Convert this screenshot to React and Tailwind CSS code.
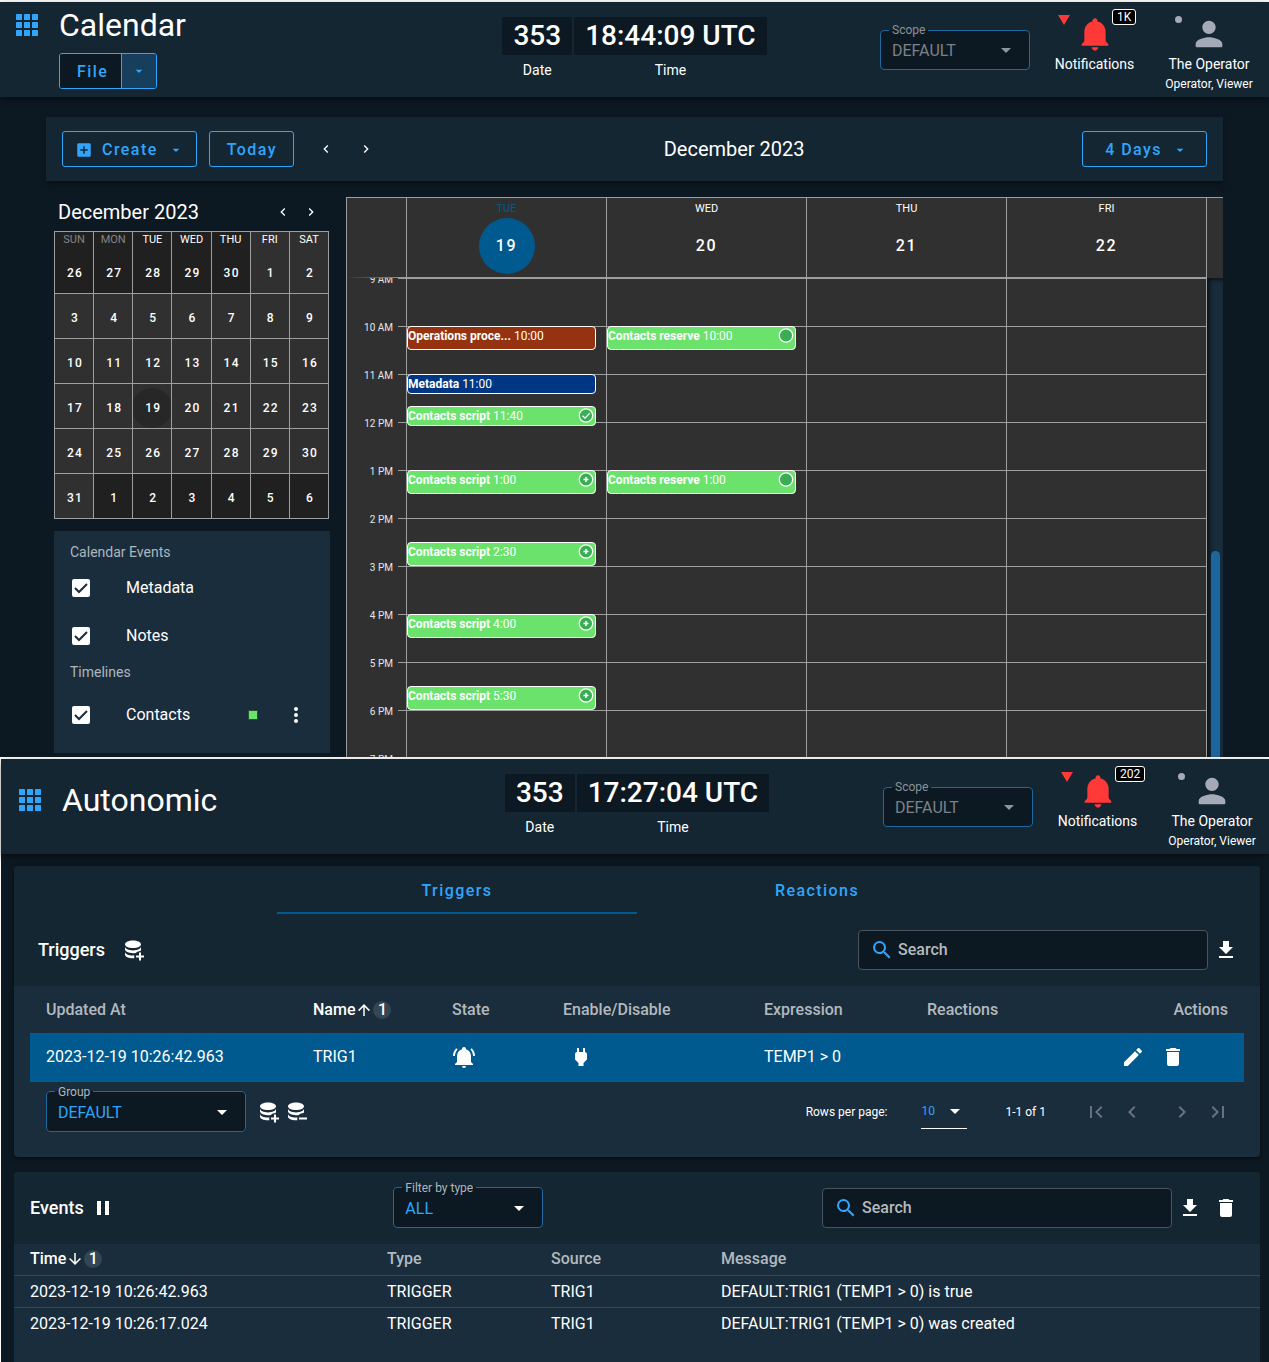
import React, { useState } from 'react';

// Icon paths, 24x24 grid
const ICONS = {
  menuDown: 'M7,10L12,15L17,10H7Z',
  plusBox: 'M17,13H13V17H11V13H7V11H11V7H13V11H17M19,3H5C3.89,3 3,3.89 3,5V19A2,2 0 0,0 5,21H19A2,2 0 0,0 21,19V5C21,3.89 20.1,3 19,3Z',
  chevronLeft: 'M15.41,16.58L10.83,12L15.41,7.41L14,6L8,12L14,18L15.41,16.58Z',
  chevronRight: 'M8.59,16.58L13.17,12L8.59,7.41L10,6L16,12L10,18L8.59,16.58Z',
  pageFirst: 'M18.41,16.59L13.82,12L18.41,7.41L17,6L11,12L17,18L18.41,16.59M6,6H8V18H6V6Z',
  pageLast: 'M5.59,7.41L10.18,12L5.59,16.59L7,18L13,12L7,6L5.59,7.41M16,6H18V18H16V6Z',
  dots: 'M12,16A2,2 0 0,1 14,18A2,2 0 0,1 12,20A2,2 0 0,1 10,18A2,2 0 0,1 12,16M12,10A2,2 0 0,1 14,12A2,2 0 0,1 12,14A2,2 0 0,1 10,12A2,2 0 0,1 12,10M12,4A2,2 0 0,1 14,6A2,2 0 0,1 12,8A2,2 0 0,1 10,6A2,2 0 0,1 12,4Z',
  bell: 'M12 22c1.1 0 2-.9 2-2h-4c0 1.1.89 2 2 2zm6.4-5.6v-5.4c0-3.3-1.9-5.9-4.9-6.5V4c0-.83-.67-1.5-1.5-1.5s-1.5.67-1.5 1.5v.5c-3 .6-4.9 3.2-4.9 6.5v5.4l-1.6 1.8v.8h16v-.8z',
  person: 'M12 12c2.21 0 4-1.79 4-4s-1.79-4-4-4-4 1.79-4 4 1.79 4 4 4zm0 2c-2.67 0-8 1.34-8 4v1.4q0 .6.6.6h14.8q.6 0 .6-.6v-1.4c0-2.66-5.33-4-8-4z',
  bellRing: 'M21,19V20H3V19L5,17V11C5,7.9 7.03,5.17 10,4.29C10,4.19 10,4.1 10,4A2,2 0 0,1 12,2A2,2 0 0,1 14,4C14,4.1 14,4.19 14,4.29C16.97,5.17 19,7.9 19,11V17L21,19M14,21A2,2 0 0,1 12,23A2,2 0 0,1 10,21M19.75,3.19L18.33,4.61C20.04,6.3 21,8.6 21,11H23C23,8.07 21.84,5.25 19.75,3.19M1,11H3C3,8.6 3.96,6.3 5.67,4.61L4.25,3.19C2.16,5.25 1,8.07 1,11Z',
  plug: 'M16,7V3H14V7H10V3H8V7H8C7,7 6,8 6,9V14.5L9.5,18V21H14.5V18L18,14.5V9C18,8 17,7 16,7Z',
  pencil: 'M20.71,7.04C21.1,6.65 21.1,6 20.71,5.63L18.37,3.29C18,2.9 17.35,2.9 16.96,3.29L15.12,5.12L18.87,8.87M3,17.25V21H6.75L17.81,9.93L14.06,6.18L3,17.25Z',
  trash: 'M19,4H15.5L14.5,3H9.5L8.5,4H5V6H19M6,19A2,2 0 0,0 8,21H16A2,2 0 0,0 18,19V7H6V19Z',
  download: 'M5,20H19V18H5M19,9H15V3H9V9H5L12,16L19,9Z',
  magnify: 'M9.5,3A6.5,6.5 0 0,1 16,9.5C16,11.11 15.41,12.59 14.44,13.73L14.71,14H15.5L20.5,19L19,20.5L14,15.5V14.71L13.73,14.44C12.59,15.41 11.11,16 9.5,16A6.5,6.5 0 0,1 3,9.5A6.5,6.5 0 0,1 9.5,3M9.5,5C7,5 5,7 5,9.5C5,12 7,14 9.5,14C12,14 14,12 14,9.5C14,7 12,5 9.5,5Z',
  pause: 'M14,19H18V5H14M6,19H10V5H6V19Z',
  arrowUp: 'M13,20H11V8L5.5,13.5L4.08,12.08L12,4.16L19.92,12.08L18.5,13.5L13,8V20Z',
  arrowDown: 'M11,4H13V16L18.5,10.5L19.92,11.92L12,19.84L4.08,11.92L5.5,10.5L11,16V4Z',
  dbPlus: 'M11,2.5C6.6,2.5 3,4.2 3,6.3C3,8.4 6.6,10.1 11,10.1C15.4,10.1 19,8.4 19,6.3C19,4.2 15.4,2.5 11,2.5M3,8.6V11.3C3,13.5 6.6,15.2 11,15.2C12,15.2 13,15.1 13.9,14.9C15.1,13.7 16.8,13 18.6,13C18.9,12.5 19,11.9 19,11.3V8.6C19,10.8 15.4,12.5 11,12.5C6.6,12.5 3,10.8 3,8.6M3,13.7V16.4C3,18.6 6.6,20.3 11,20.3L12.4,20.2C12.2,19.2 12.2,18.3 12.4,17.5L11,17.6C6.6,17.6 3,15.9 3,13.7M17,14.5V17.5H14V19.5H17V22.5H19V19.5H22V17.5H19V14.5H17Z',
  dbMinus: 'M11,2.5C6.6,2.5 3,4.2 3,6.3C3,8.4 6.6,10.1 11,10.1C15.4,10.1 19,8.4 19,6.3C19,4.2 15.4,2.5 11,2.5M3,8.6V11.3C3,13.5 6.6,15.2 11,15.2C12,15.2 13,15.1 13.9,14.9C15.1,13.7 16.8,13 18.6,13C18.9,12.5 19,11.9 19,11.3V8.6C19,10.8 15.4,12.5 11,12.5C6.6,12.5 3,10.8 3,8.6M3,13.7V16.4C3,18.6 6.6,20.3 11,20.3L12.4,20.2C12.2,19.2 12.2,18.3 12.4,17.5L11,17.6C6.6,17.6 3,15.9 3,13.7M14,17.5V19.5H22V17.5H14Z',
};

const Icon = ({ name, className = 'size-6' }) => (
  <svg viewBox="0 0 24 24" fill="currentColor" className={`shrink-0 ${className}`} aria-hidden="true">
    <path d={ICONS[name]} />
  </svg>
);

const IconButton = ({ name, label, className = 'size-9', iconClass = 'size-6', disabled = false }) => (
  <button type="button" aria-label={label} disabled={disabled} className={`flex shrink-0 items-center justify-center ${className}`}>
    <Icon name={name} className={iconClass} />
  </button>
);

// Outlined select with the label sitting in the top border
const OutlinedSelect = ({ id, label, value, width, tone = 'text-[#30a5fb]', labelTone = 'text-[#aeb6bd]', arrowTone = 'text-white', disabled = false }) => (
  <fieldset className={`relative shrink-0 rounded border border-[#2069a0] bg-[#0d1922] pb-[3px] ${width}`}>
    <legend className="ml-2 h-3 px-[3px]">
      <label htmlFor={id} className={`block text-xs leading-3 ${labelTone}`}>{label}</label>
    </legend>
    <select
      id={id}
      disabled={disabled}
      className={`block h-[30px] w-full appearance-none bg-transparent pl-[11px] pr-10 text-base leading-6 opacity-100 outline-none ${tone}`}
    >
      <option>{value}</option>
    </select>
    <Icon name="menuDown" className={`pointer-events-none absolute right-[11px] bottom-[7px] size-6 ${arrowTone}`} />
  </fieldset>
);

const SearchBox = ({ id }) => (
  <div className="flex h-10 w-[350px] items-center gap-1 rounded border border-[#4a545c] bg-[#0d1922] pl-[11px]">
    <Icon name="magnify" className="size-6 text-[#30a5fb]" />
    <input
      id={id}
      type="text"
      aria-label="Search"
      placeholder="Search"
      className="w-full min-w-0 bg-transparent text-base font-medium text-white outline-none placeholder:text-[#b6babd]"
    />
  </div>
);

const Header = ({ id, title, time, badge, padding, titlePadding, children }) => (
  <header className={`relative z-10 grid min-h-[95px] grid-cols-[1fr_auto_1fr] bg-[#152633] shadow-[0_3px_8px_rgba(0,0,0,0.45)] ${padding}`}>
    <div className={`flex items-start gap-[21px] ${titlePadding}`}>
      <button type="button" aria-label="Applications" className="flex h-10 items-center">
        <svg viewBox="0 0 22 22" className="size-[22px] fill-[#30a5fb]">
          {[0, 8, 16].map(y => [0, 8, 16].map(x => (
            <rect key={`${x}-${y}`} x={x} y={y} width="6" height="6" rx="0.5" />
          )))}
        </svg>
      </button>
      <div>
        <h1 className="text-[32px] leading-10 text-white">{title}</h1>
        {children}
      </div>
    </div>

    <div className="flex gap-0.5 pt-[15px] text-center">
      <div>
        <div className="bg-[#0d1922] px-[11px] text-[28px] leading-[38px] font-medium">353</div>
        <div className="mt-[5px] text-sm">Date</div>
      </div>
      <div>
        <div className="bg-[#0d1922] px-[11px] text-[28px] leading-[38px] font-medium">{time}</div>
        <div className="mt-[5px] text-sm">Time</div>
      </div>
    </div>

    <div className="flex items-start justify-end gap-6">
      <div className="pt-[22px]">
        <OutlinedSelect id={`${id}-scope`} label="Scope" value="DEFAULT" width="w-[150px]" tone="text-[#7b8288]" labelTone="text-[#8b9298]" arrowTone="text-[#8f959a]" disabled />
      </div>
      <div className="relative flex w-[81px] flex-col items-center pt-3">
        <svg viewBox="0 0 12 10" className="absolute top-[13px] left-1 h-[10px] w-3 fill-[#ff3838]">
          <path d="M0 0H12L6 10Z" />
        </svg>
        <span className="absolute top-[7px] left-[58px] rounded-[3px] border border-white bg-black px-1 text-xs leading-[14px]">{badge}</span>
        <Icon name="bell" className="size-10 text-[#ff3838]" />
        <span className="text-sm whitespace-nowrap">Notifications</span>
      </div>
      <div className="relative flex w-[100px] flex-col items-center pt-3">
        <span className="absolute top-[14px] left-4 size-[7px] rounded-full bg-[#a4abb6]" />
        <Icon name="person" className="size-10 text-[#a4abb6]" />
        <span className="text-sm whitespace-nowrap">The Operator</span>
        <span className="text-xs leading-5 whitespace-nowrap">Operator, Viewer</span>
      </div>
    </div>
  </header>
);

const WEEKDAYS = ['SUN', 'MON', 'TUE', 'WED', 'THU', 'FRI', 'SAT'];

// Six weeks, starting on Sunday November 26
const MONTH = Array.from({ length: 42 }, (_, i) => {
  if (i < 5) return { day: 26 + i, out: true };
  if (i < 36) return { day: i - 4, out: false };
  return { day: i - 35, out: true };
});

const MiniCalendar = () => (
  <div className="mr-px grid grid-cols-7 border-t border-l border-[#9e9e9e]">
    {MONTH.map(({ day, out }, i) => (
      <div key={i} className={`flex flex-col items-center overflow-hidden border-r border-b border-[#9e9e9e] ${out ? 'bg-[#202020]' : 'bg-[#303030]'}`}>
        {i < 7 && (
          <span className={`h-[17px] text-[11px] leading-4 ${i < 2 ? 'text-[#858585]' : 'text-white'}`}>{WEEKDAYS[i]}</span>
        )}
        <button
          type="button"
          className={`mt-1 flex size-10 items-center justify-center rounded-full pl-0.5 text-xs font-medium tracking-widest ${!out && day === 19 ? 'bg-[#272727]' : ''}`}
        >
          {day}
        </button>
      </div>
    ))}
  </div>
);

const EventCheck = ({ id, label, height = 'h-12', children }) => {
  const [checked, setChecked] = useState(true);
  return (
    <div className={`flex items-center pl-[18px] pr-[26px] ${height}`}>
      <span className="relative flex size-[18px]">
        <input
          id={id}
          type="checkbox"
          checked={checked}
          onChange={e => setChecked(e.target.checked)}
          className="size-[18px] appearance-none rounded-[2px] border-2 border-white checked:bg-white"
        />
        {checked && (
          <svg viewBox="0 0 18 18" className="pointer-events-none absolute inset-0 size-[18px] fill-none stroke-[#1a2d3d] stroke-2">
            <path d="M3 9L7 13L15 5" />
          </svg>
        )}
      </span>
      <label htmlFor={id} className="ml-9 flex-1 text-base">{label}</label>
      {children}
    </div>
  );
};

const HOURS = ['9 AM', '10 AM', '11 AM', '12 PM', '1 PM', '2 PM', '3 PM', '4 PM', '5 PM', '6 PM', '7 PM'];
const HOUR_PX = 48;

// start is in hours after 9 AM
const DAYS = [
  {
    name: 'TUE', day: 19, today: true,
    events: [
      { title: 'Operations proce...', time: '10:00', start: 1, height: 24, color: 'bg-[#953210]' },
      { title: 'Metadata', time: '11:00', start: 2, height: 20, color: 'bg-[#003784]' },
      { title: 'Contacts script', time: '11:40', start: 8 / 3, height: 20, color: 'bg-[#6ae26c]', mark: 'check' },
      { title: 'Contacts script', time: '1:00', start: 4, height: 24, color: 'bg-[#6ae26c]', mark: 'plus' },
      { title: 'Contacts script', time: '2:30', start: 5.5, height: 24, color: 'bg-[#6ae26c]', mark: 'plus' },
      { title: 'Contacts script', time: '4:00', start: 7, height: 24, color: 'bg-[#6ae26c]', mark: 'plus' },
      { title: 'Contacts script', time: '5:30', start: 8.5, height: 24, color: 'bg-[#6ae26c]', mark: 'plus' },
    ],
  },
  {
    name: 'WED', day: 20,
    events: [
      { title: 'Contacts reserve', time: '10:00', start: 1, height: 24, color: 'bg-[#6ae26c]', mark: 'none' },
      { title: 'Contacts reserve', time: '1:00', start: 4, height: 24, color: 'bg-[#6ae26c]', mark: 'none' },
    ],
  },
  { name: 'THU', day: 21, events: [] },
  { name: 'FRI', day: 22, events: [] },
];

const EventMark = ({ mark }) => (
  <svg viewBox="0 0 16 16" className="size-4 shrink-0">
    <circle cx="8" cy="8.5" r="6.7" fill="#3aae55" stroke="#fff" strokeWidth="1.3" />
    {mark === 'check' && <path d="M4.5 8.8L7 11.2L11.7 6.2" fill="none" stroke="#fff" strokeWidth="1.3" />}
    {mark === 'plus' && <path d="M8 6V11M5.5 8.5H10.5" stroke="#fff" strokeWidth="1.5" />}
  </svg>
);

const CalendarEvent = ({ title, time, start, height, color, mark }) => (
  <div
    className={`absolute right-[10px] left-0 flex items-start justify-between overflow-hidden rounded border border-white pr-px text-xs leading-[18px] ${color}`}
    style={{ top: Math.round(start * HOUR_PX), height }}
  >
    <span className="truncate"><strong className="font-bold">{title}</strong> {time}</span>
    {mark && <EventMark mark={mark} />}
  </div>
);

const WeekView = () => (
  <div className="flex min-w-0 flex-1 flex-col border-t border-l border-[#9e9e9e]">
    <div className="flex bg-[#303030]">
      <div className="flex w-[60px] shrink-0 flex-col justify-end border-r border-[#9e9e9e]">
        <div className="h-px bg-gradient-to-r from-transparent to-[#9e9e9e]" />
      </div>
      {DAYS.map(d => (
        <div key={d.day} className="flex flex-1 flex-col items-center border-r border-b border-[#9e9e9e] pb-[3px]">
          <span className={`h-5 text-[11px] leading-[22px] ${d.today ? 'text-[#005a8f]' : 'text-white'}`}>{d.name}</span>
          <button
            type="button"
            className={`flex size-14 items-center justify-center rounded-full text-base font-medium tracking-widest ${d.today ? 'bg-[#005a8f]' : ''}`}
          >
            {d.day}
          </button>
        </div>
      ))}
      <div className="w-4 shrink-0" />
    </div>

    <div className="flex h-[479px] overflow-hidden bg-[#303030]">
      <div className="w-[60px] shrink-0 border-r border-[#9e9e9e]">
        {HOURS.map(h => (
          <div key={h} className="flex h-12 items-start justify-end gap-[5px]">
            <span className="-mt-1 text-[10px] leading-3 text-[#e6e6e6]">{h}</span>
            <span className="h-px w-2 bg-[#9e9e9e]" />
          </div>
        ))}
      </div>
      {DAYS.map(d => (
        <div key={d.day} className="relative flex-1 border-r border-[#9e9e9e]">
          {HOURS.map(h => <div key={h} className="h-12 border-t border-[#9e9e9e]" />)}
          {d.events.map(e => <CalendarEvent key={e.time} {...e} />)}
        </div>
      ))}
      {/* scrollbar */}
      <div className="w-4 shrink-0 bg-[#192c3b] pl-1 shadow-[inset_3px_2px_4px_#0a141b]">
        <div className="mt-[273px] h-[300px] w-[9px] rounded-full bg-[#1b679d]" />
      </div>
    </div>
  </div>
);

const outlineButton = 'flex h-9 items-center rounded-[3px] border border-[#30a5fb] pt-px text-base font-medium tracking-[0.09em] text-[#30a5fb]';

const CalendarPage = () => (
  <section className="mt-0.5 bg-[#0d1922]">
    <Header id="cal" title="Calendar" time="18:44:09 UTC" badge="1K" padding="px-[10px]" titlePadding="pt-[3px] pl-1.5">
      <div className="mt-2 flex h-9 w-fit overflow-hidden rounded-[3px] border border-[#30a5fb] text-base font-medium tracking-[0.09em] text-[#30a5fb]">
        <button type="button" className="bg-[#0d1922] pt-0.5 pr-[13px] pl-[17px]">File</button>
        <button type="button" aria-label="Open file menu" className="flex w-[35px] items-center justify-center border-l border-[#30a5fb] bg-[#173e5d]">
          <Icon name="menuDown" className="size-4" />
        </button>
      </div>
    </Header>

    <main className="px-[46px] pt-5">
      <div className="flex h-16 items-center bg-[#152633] px-4 shadow-[0_3px_6px_rgba(0,0,0,0.4)]">
        <button type="button" className={`${outlineButton} px-3`}>
          <Icon name="plusBox" className="size-[18px]" />
          <span className="ml-[9px]">Create</span>
          <Icon name="menuDown" className="ml-2.5 size-4" />
        </button>
        <button type="button" className={`${outlineButton} ml-3 pr-4 pl-[17px]`}>Today</button>
        <div className="ml-3 flex">
          <IconButton name="chevronLeft" label="Previous" className="size-10" iconClass="size-4" />
          <IconButton name="chevronRight" label="Next" className="size-10" iconClass="size-4" />
        </div>
        <h2 className="flex-1 text-center text-xl">December 2023</h2>
        <button type="button" className={`${outlineButton} pr-[18px] pl-[22px]`}>
          4 Days
          <Icon name="menuDown" className="ml-2.5 size-4" />
        </button>
      </div>

      <div className="mt-4 flex items-start gap-4">
        <aside className="ml-2 w-[276px] shrink-0">
          <div className="mb-1 flex h-[30px] items-center pr-[5px] pl-1">
            <h3 className="flex-1 text-xl">December 2023</h3>
            <IconButton name="chevronLeft" label="Previous month" className="size-7" iconClass="size-4" />
            <IconButton name="chevronRight" label="Next month" className="size-7" iconClass="size-4" />
          </div>
          <MiniCalendar />
          <div className="mt-3 bg-[#1a2d3d] pt-[9px] pb-[7px]">
            <h4 className="px-4 text-sm leading-6 text-[#aeb6bd]">Calendar Events</h4>
            <EventCheck id="ev-metadata" label="Metadata" />
            <EventCheck id="ev-notes" label="Notes" />
            <h4 className="px-4 text-sm leading-6 text-[#aeb6bd]">Timelines</h4>
            <EventCheck id="ev-contacts" label="Contacts" height="h-[62px]">
              <span className="mr-[30px] size-[10px] border border-[#28502f] bg-[#6ae26c]" />
              <IconButton name="dots" label="Contacts menu" className="w-4" iconClass="size-6" />
            </EventCheck>
          </div>
        </aside>
        <WeekView />
      </div>
    </main>
  </section>
);

const SortBadge = ({ icon }) => (
  <>
    <Icon name={icon} className="size-[18px]" />
    <span className="flex size-[18px] items-center justify-center rounded-full bg-[#344654]">1</span>
  </>
);

const TriggersCard = () => {
  const [tab, setTab] = useState('Triggers');
  return (
    <div className="overflow-hidden rounded bg-[#1a2d3d] shadow-[0_2px_5px_rgba(0,0,0,0.5)]">
      <div className="bg-[#152633]">
        <div className="flex justify-center" role="tablist">
          {['Triggers', 'Reactions'].map(t => (
            <button
              key={t}
              type="button"
              role="tab"
              aria-selected={tab === t}
              onClick={() => setTab(t)}
              className={`h-12 w-[360px] border-b-2 pt-1 text-base font-medium tracking-[0.09em] text-[#30a5fb] ${tab === t ? 'border-[#005a8f]' : 'border-transparent'}`}
            >
              {t}
            </button>
          ))}
        </div>
        <div className="flex h-18 items-center pr-4 pl-6">
          <h2 className="text-lg font-medium">Triggers</h2>
          <IconButton name="dbPlus" label="New trigger" className="ml-[11px] size-9" />
          <div className="ml-auto flex items-center">
            <SearchBox id="trigger-search" />
            <IconButton name="download" label="Download triggers" />
          </div>
        </div>
      </div>

      <div className="px-4">
        <table className="w-full table-fixed text-left text-base">
          <colgroup>
            <col className="w-[267px]" />
            <col className="w-[139px]" />
            <col className="w-[111px]" />
            <col className="w-[201px]" />
            <col className="w-[163px]" />
            <col />
            <col className="w-[139px]" />
          </colgroup>
          <thead>
            <tr className="h-[47px] text-[#b3b9be]">
              <th className="px-4 pt-0.5 font-medium">Updated At</th>
              <th className="px-4 pt-0.5 font-medium text-white">
                <span className="flex items-center">Name<SortBadge icon="arrowUp" /></span>
              </th>
              <th className="px-4 pt-0.5 font-medium">State</th>
              <th className="px-4 pt-0.5 font-medium">Enable/Disable</th>
              <th className="px-4 pt-0.5 font-medium">Expression</th>
              <th className="px-4 pt-0.5 font-medium">Reactions</th>
              <th className="px-4 pt-0.5 text-right font-medium">Actions</th>
            </tr>
          </thead>
          <tbody>
            <tr className="h-12 border-y border-[#3b4b58] bg-[#005a8f]">
              <td className="px-4">2023-12-19 10:26:42.963</td>
              <td className="px-4">TRIG1</td>
              <td className="px-4"><Icon name="bellRing" /></td>
              <td className="px-1.5"><IconButton name="plug" label="Enable or disable" className="h-9 w-14" /></td>
              <td className="px-4">TEMP1 &gt; 0</td>
              <td className="px-4" />
              <td className="px-4">
                <span className="flex gap-4">
                  <IconButton name="pencil" label="Edit" className="size-6" />
                  <IconButton name="trash" label="Delete" className="size-6" />
                </span>
              </td>
            </tr>
          </tbody>
        </table>

        <div className="flex items-end pt-1 pr-2 pb-[25px] pl-4">
          <OutlinedSelect id="group" label="Group" value="DEFAULT" width="w-[200px]" />
          <div className="ml-[11px] flex gap-1 pb-2">
            <IconButton name="dbPlus" label="Add group" className="size-6" />
            <IconButton name="dbMinus" label="Remove group" className="size-6" />
          </div>
          <div className="ml-auto flex h-10 items-center text-xs">
            <label htmlFor="rows">Rows per page:</label>
            <span className="relative ml-[34px] mt-0.5 flex border-b border-white">
              <select id="rows" className="h-8 w-[46px] appearance-none bg-transparent pb-0.5 text-xs text-[#30a5fb] outline-none">
                <option>10</option>
              </select>
              <Icon name="menuDown" className="pointer-events-none absolute top-[3px] right-0 size-6" />
            </span>
            <span className="ml-[38px]">1-1 of 1</span>
            <div className="ml-8 flex text-[#66727c]">
              <IconButton name="pageFirst" label="First page" disabled />
              <IconButton name="chevronLeft" label="Previous page" disabled />
            </div>
            <div className="ml-3.5 flex text-[#66727c]">
              <IconButton name="chevronRight" label="Next page" disabled />
              <IconButton name="pageLast" label="Last page" disabled />
            </div>
          </div>
        </div>
      </div>
    </div>
  );
};

const EVENTS = [
  { time: '2023-12-19 10:26:42.963', type: 'TRIGGER', source: 'TRIG1', message: 'DEFAULT:TRIG1 (TEMP1 > 0) is true' },
  { time: '2023-12-19 10:26:17.024', type: 'TRIGGER', source: 'TRIG1', message: 'DEFAULT:TRIG1 (TEMP1 > 0) was created' },
];

const EventsCard = () => (
  <div className="mt-[15px] flex-1 overflow-hidden rounded-t bg-[#1a2d3d]">
    <div className="flex items-end justify-between bg-[#152633] px-4 pt-[10px] pb-4">
      <div className="flex h-10 items-center">
        <h2 className="text-lg font-medium">Events</h2>
        <IconButton name="pause" label="Pause" className="ml-[7px] size-6" />
      </div>
      <OutlinedSelect id="filter" label="Filter by type" value="ALL" width="w-[150px]" />
      <div className="flex items-center">
        <SearchBox id="event-search" />
        <IconButton name="download" label="Download events" />
        <IconButton name="trash" label="Clear events" />
      </div>
    </div>
    <table className="w-full table-fixed text-left text-base">
      <colgroup>
        <col className="w-[357px]" />
        <col className="w-[164px]" />
        <col className="w-[170px]" />
        <col />
      </colgroup>
      <thead>
        <tr className="h-8 border-b border-[#344857] text-[#b3b9be]">
          <th className="px-4 font-medium text-white">
            <span className="flex items-center">Time<SortBadge icon="arrowDown" /></span>
          </th>
          <th className="px-4 font-medium">Type</th>
          <th className="px-4 font-medium">Source</th>
          <th className="px-4 font-medium">Message</th>
        </tr>
      </thead>
      <tbody>
        {EVENTS.map(e => (
          <tr key={e.time} className="h-8 border-b border-[#344857] last:border-b-0">
            <td className="px-4">{e.time}</td>
            <td className="px-4">{e.type}</td>
            <td className="px-4">{e.source}</td>
            <td className="px-4">{e.message}</td>
          </tr>
        ))}
      </tbody>
    </table>
  </div>
);

const AutonomicPage = () => (
  <section className="mt-0.5 flex flex-1 flex-col border-l border-white bg-[#0d1922]">
    <Header id="auto" title="Autonomic" time="17:27:04 UTC" badge="202" padding="pr-[7px] pl-[11px]" titlePadding="pt-[21px] pl-[7px]" />
    <main className="flex flex-1 flex-col pt-3 pr-[9px] pl-[13px]">
      <TriggersCard />
      <EventsCard />
    </main>
  </section>
);

export default function App() {
  return (
    <div className="flex min-h-screen flex-col bg-white font-[Roboto,sans-serif] text-white">
      <CalendarPage />
      <AutonomicPage />
    </div>
  );
}
